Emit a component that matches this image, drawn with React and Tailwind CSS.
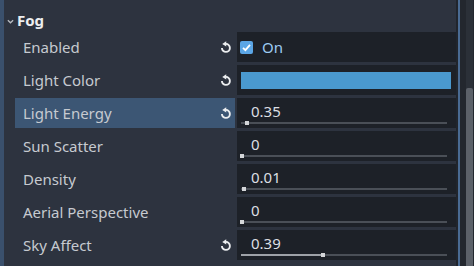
import React from 'react';

const ResetIcon = () => (
    <svg width="13" height="13" viewBox="0 0 16 16" className="shrink-0">
        <path d="M8.5 3.6A4.9 4.9 0 1 1 3.6 8.5" fill="none" stroke="#eceef0" strokeWidth="2.3" />
        <path d="M4 3.6L8.9 0.4V6.8Z" fill="#eceef0" />
    </svg>
);

const Slider = ({ value, pct, fill }) => (
    <div className="relative h-full w-full">
        <span className="absolute left-[14px] top-[3px] text-[15px] leading-[20px] text-[#dcdfe3]">{value}</span>
        <div className="absolute left-[4px] right-[9px] top-[24px] h-[2px] bg-[#4a4f57]">
            {fill && <div className="h-full bg-[#9ea2a8]" style={{ width: `${pct}%` }} />}
            <div
                className="absolute top-[-1px] h-[4px] w-[4px] bg-[#d4d6d9]"
                style={{ left: `calc(${pct}% - 1px)` }}
            />
        </div>
    </div>
);

const Row = ({ label, reset, selected, children }) => (
    <div className="flex h-[30px] mb-[3px]">
        <div
            className={
                'ml-[11px] w-[220px] pl-[8px] pr-[3px] flex items-center justify-between ' +
                (selected ? 'bg-[#3c5674]' : '')
            }
        >
            <span className="text-[15px] text-[#c6cad0]">{label}</span>
            {reset && <ResetIcon />}
        </div>
        <div className="ml-[2px] w-[219px] bg-[#1d2128]">{children}</div>
    </div>
);

export default function App() {
    return (
        <div
            className="w-[474px] h-[266px] overflow-hidden flex bg-[#2d333f]"
            style={{ fontFamily: '"Noto Sans", "Open Sans", sans-serif' }}
        >
            <div className="w-[4px] bg-[#3a506c]" />
            <div className="w-[452px] flex flex-col">
                <div className="h-[5px] overflow-hidden">
                    <div className="ml-[17px] mt-[-16px] text-[15px] leading-[20px] text-[#5f656e]">Color</div>
                </div>
                <div className="h-[27px] pt-[4px] flex items-center">
                    <svg width="7" height="7" viewBox="0 0 8 8" className="ml-[3px] mr-[3px] mt-[2px]">
                        <path d="M1 2.5L4 5.5L7 2.5" fill="none" stroke="#b8bcc2" strokeWidth="1.5" />
                    </svg>
                    <span className="text-[15px] font-bold text-[#eceef0]">Fog</span>
                </div>
                <Row label="Enabled" reset>
                    <div className="h-full flex items-center pl-[3px]">
                        <div className="w-[13px] h-[13px] rounded-[2px] bg-[#5ba6e6] flex items-center justify-center">
                            <svg width="11" height="11" viewBox="0 0 11 11">
                                <path d="M2 5.8L4.4 8.2L9 2.8" fill="none" stroke="#ffffff" strokeWidth="1.8" />
                            </svg>
                        </div>
                        <span className="ml-[9px] text-[15px] text-[#9ccaf2]">On</span>
                    </div>
                </Row>
                <Row label="Light Color" reset>
                    <div className="h-full flex items-center pl-[4px] pr-[5px]">
                        <div className="w-full h-[17px] bg-[#4a99cf]" />
                    </div>
                </Row>
                <Row label="Light Energy" reset selected>
                    <Slider value="0.35" pct={2.5} />
                </Row>
                <Row label="Sun Scatter">
                    <Slider value="0" pct={0} />
                </Row>
                <Row label="Density">
                    <Slider value="0.01" pct={1} />
                </Row>
                <Row label="Aerial Perspective">
                    <Slider value="0" pct={0} />
                </Row>
                <Row label="Sky Affect" reset>
                    <Slider value="0.39" pct={39.5} fill />
                </Row>
            </div>
            <div className="w-[2px] bg-[#21252c]" />
            <div className="w-[2px] bg-[#4a6b93]" />
            <div className="w-[6px] bg-[#23272e]" />
            <div className="w-[7px] flex flex-col bg-[#2b3038]">
                <div className="h-[88px]" />
                <div className="flex-1 bg-[#5c6169] rounded-t-[2px]" />
            </div>
            <div className="w-[1px] bg-[#23272e]" />
        </div>
    );
}
